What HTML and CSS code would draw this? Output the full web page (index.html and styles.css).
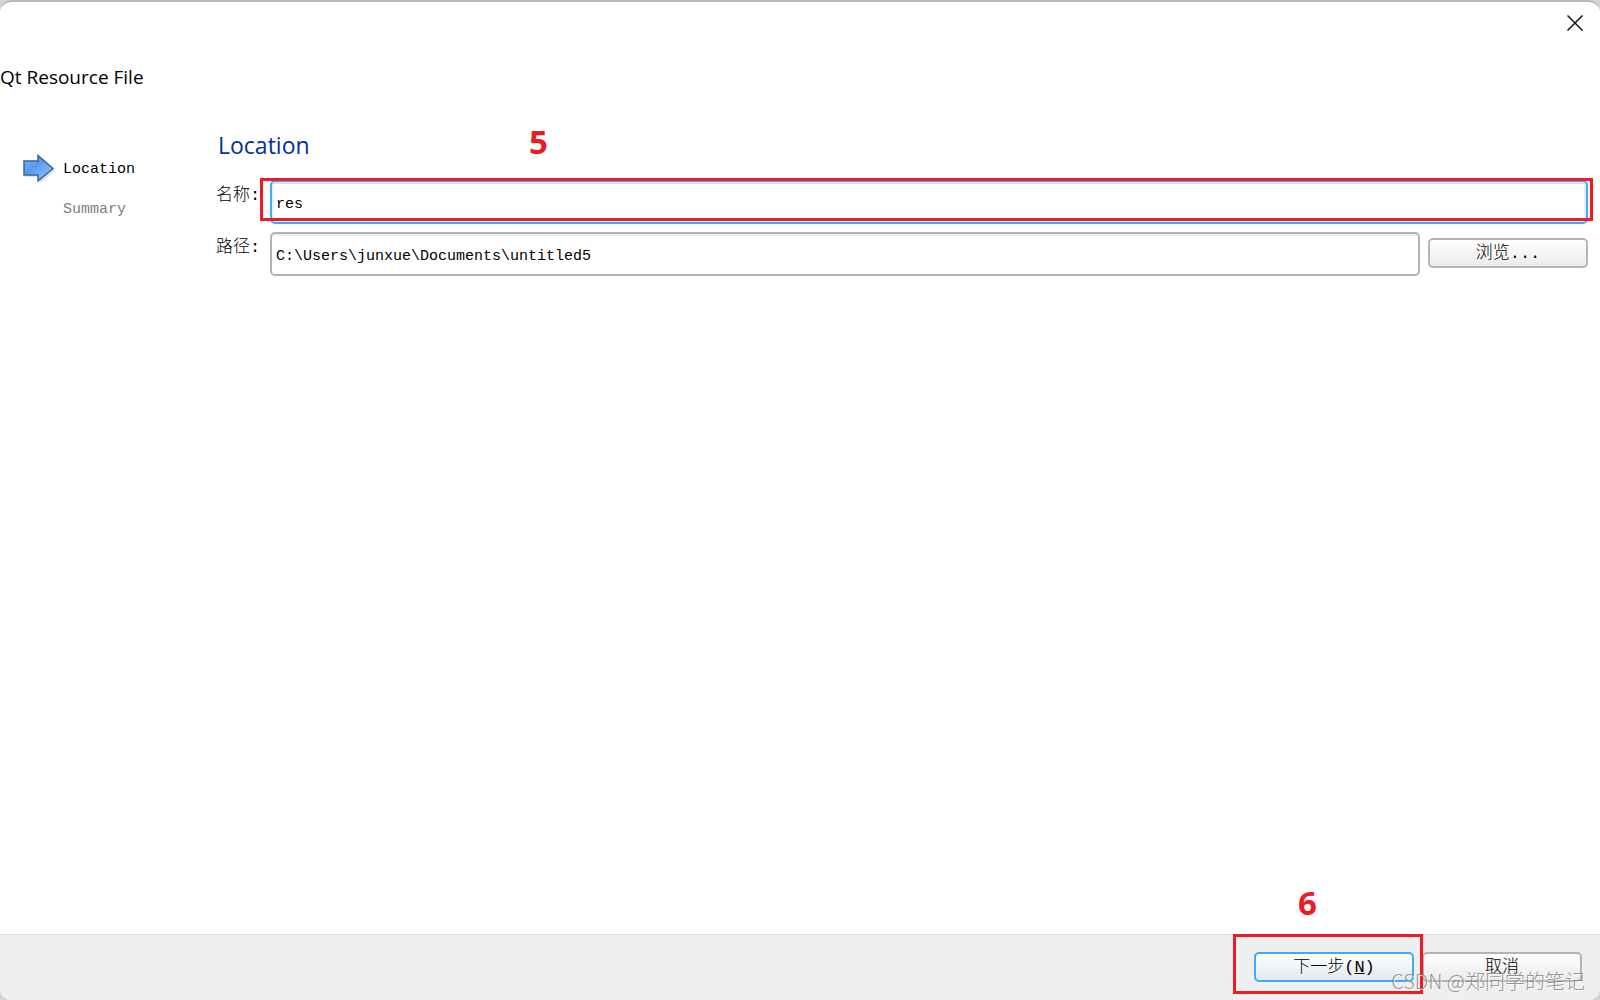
FILE: index.html
```
<!DOCTYPE html>
<html lang="zh-CN">
<head>
  <meta charset="UTF-8">
  <meta name="viewport" content="width=device-width, initial-scale=1.0">
  <title>Qt Resource File</title>
  <link rel="stylesheet" href="styles.css">
</head>
<body>
  <div class="wizard">
    <header class="titlebar">
      <button class="close" type="button" aria-label="关闭">
        <svg width="16" height="16" viewBox="0 0 16 16"><path d="M.5 .5l15 15M15.5 .5l-15 15" stroke="#111" stroke-width="1.5"/></svg>
      </button>
    </header>
    <h1>Qt Resource File</h1>

    <div class="content">
      <ul class="steps">
        <li class="step current">
          <svg class="arrow" width="34" height="30" viewBox="0 0 34 30">
            <defs>
              <linearGradient id="arrow-fill" x1="0" y1="0" x2="1" y2="1">
                <stop offset="0" stop-color="#82b6f4"/>
                <stop offset=".4" stop-color="#5899ed"/>
                <stop offset="1" stop-color="#a5cafa"/>
              </linearGradient>
            </defs>
            <path d="M2 9h15V4l15 13-15 12v-6H2z" fill="#888" opacity=".25"/>
            <path d="M1 7h14V1.500l15 13-15 12.500v-6H1z" fill="url(#arrow-fill)" stroke="#35669d" stroke-width="1.500"/>
          </svg>
          <span>Location</span>
        </li>
        <li class="step">
          <span>Summary</span>
        </li>
      </ul>

      <form class="page" id="location-form">
        <h2>Location</h2>
        <span class="mark mark-5">5</span>
        <div class="row">
          <label for="name">名称:</label>
          <div class="field">
            <input class="active" type="text" id="name" value="res">
            <span class="frame frame-name"></span>
          </div>
        </div>
        <div class="row">
          <label for="path">路径:</label>
          <div class="field">
            <input type="text" id="path" value="C:\Users\junxue\Documents\untitled5">
          </div>
          <button class="btn browse" type="button">浏览...</button>
        </div>
      </form>
    </div>

    <footer>
      <div class="next">
        <button class="btn default" type="submit" form="location-form">下一步(<u>N</u>)</button>
        <span class="frame frame-next"></span>
        <span class="mark mark-6">6</span>
      </div>
      <button class="btn" type="button">取消</button>
    </footer>
    <div class="watermark">CSDN @郑同学的笔记</div>
  </div>
</body>
</html>
```

FILE: styles.css
```
* {
  box-sizing: border-box;
}

body {
  margin: 0;
  background: #d4d4d4;
  color: #000;
  font-family: "Liberation Mono", "Noto Sans CJK SC", monospace;
  font-size: 15px;
}

.wizard {
  position: relative;
  display: flex;
  flex-direction: column;
  height: 100vh;
  background: #fff;
  border-top: 2px solid #b8b8b8;
  border-radius: 12px;
  overflow: hidden;
}

.titlebar {
  display: flex;
  justify-content: flex-end;
  padding: 13px 17px;
  height: 60px;
}

.close {
  width: 16px;
  height: 16px;
  padding: 0;
  border: 0;
  background: none;
}

.close svg {
  display: block;
}

h1 {
  margin: 0;
  font: 19px/30px "Open Sans", "Noto Sans", sans-serif;
}

/* 步骤列表和表单 */
.content {
  flex: 1;
  display: flex;
}

.steps {
  flex: none;
  width: 216px;
  margin: 0;
  padding: 57px 0 0 23px;
  list-style: none;
}

.step {
  display: flex;
  align-items: center;
  height: 40px;
  padding-left: 40px;
  color: #808080;
}

.step.current {
  gap: 6px;
  padding-left: 0;
  color: #000;
}

.page {
  position: relative;
  flex: 1;
  display: flex;
  flex-direction: column;
  gap: 8px;
  padding: 33px 12px 0 0;
}

h2 {
  margin: 0 0 7px;
  padding-left: 2px;
  color: #003399;
  font: 23px/40px "Open Sans", "Noto Sans", sans-serif;
}

.row {
  display: flex;
  align-items: center;
  gap: 8px;
}

.row label {
  align-self: flex-start;
  width: 46px;
  font-size: 17px;
  font-weight: 300;
  line-height: 32px;
  white-space: nowrap;
}

.field {
  position: relative;
  flex: 1;
}

.field input {
  display: block;
  width: 100%;
  height: 44px;
  padding: 4px 4px 0;
  border: 2px solid #b4b4b4;
  border-radius: 5px;
  box-shadow: inset 0 2px #ececec;
  font: inherit;
  outline: none;
}

.field input.active {
  border-color: #3fa9fb;
  box-shadow: inset 0 2px #d5e2ee, inset 2px 0 #e5f1fb, inset -2px 0 #e5f1fb;
}

.btn {
  width: 160px;
  height: 30px;
  padding: 2px 0 0;
  border: 2px solid #b4b4b4;
  border-radius: 5px;
  background: linear-gradient(#fff, #ebebeb);
  color: #000;
  font: inherit;
  font-size: 17px;
  font-weight: 300;
  line-height: 24px;
}

.btn.default {
  border-color: #3fa9fb;
  background: linear-gradient(#fff, #e2e8ee);
}

.browse {
  margin-bottom: 2px;
}

footer {
  display: flex;
  justify-content: flex-end;
  gap: 8px;
  padding: 17px 18px 18px;
  border-top: 1px solid #dcdcdc;
  background: #efefef;
}

.next {
  position: relative;
}

/* 红色标注 */
.frame {
  position: absolute;
  border: 3px solid #ed1c24;
  pointer-events: none;
}

.frame-name {
  inset: -2px -5px 3px -10px;
}

.frame-next {
  inset: -18px -9px -12px -21px;
}

.mark {
  position: absolute;
  color: #ed1c24;
  font: bold 33px/40px "Open Sans", "Noto Sans", sans-serif;
}

.mark-5 {
  top: 30px;
  left: 313px;
}

.mark-6 {
  top: -69px;
  left: 44px;
}

.watermark {
  position: absolute;
  right: 15px;
  bottom: 4px;
  color: rgba(125, 125, 125, .8);
  font: 300 20px/30px "Noto Sans CJK SC", sans-serif;
  text-shadow: 1px 1px rgba(255, 255, 255, .7);
  pointer-events: none;
}
```
